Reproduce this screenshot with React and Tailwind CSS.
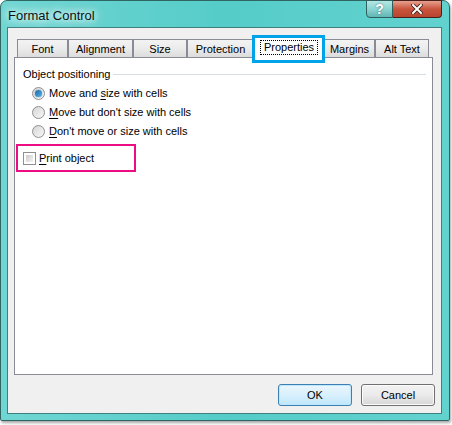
import { useState } from "react";

const TABS = [
  { label: "Font", w: "w-[51px]" },
  { label: "Alignment", w: "w-[65px]" },
  { label: "Size", w: "w-[54px]" },
  { label: "Protection", w: "w-[67px]" },
  { label: "Properties", w: "w-[70px]" },
  { label: "Margins", w: "w-[51px]" },
  { label: "Alt Text", w: "w-[54px]" },
];

const POSITIONS = [
  { key: "both", pre: "Move and ", mn: "s", post: "ize with cells" },
  { key: "move", pre: "", mn: "M", post: "ove but don't size with cells" },
  { key: "none", pre: "", mn: "D", post: "on't move or size with cells" },
];

/* ---------------------------------------------
   Small Win7-style controls
--------------------------------------------- */
const Radio = ({ checked }) => (
  <span className="w-[13px] h-[13px] rounded-full border border-[#8f8f8f] bg-gradient-to-br from-[#d6d6d6] to-[#f7f7f7] flex items-center justify-center shrink-0">
    {checked && (
      <span className="w-[7px] h-[7px] rounded-full bg-gradient-to-br from-[#1d6aa5] to-[#4fb2ec] shadow-[0_0_1px_#0b4b80]" />
    )}
  </span>
);

const Checkbox = () => (
  <span className="w-[13px] h-[13px] border border-[#8f8f8f] bg-white p-[2px] shrink-0">
    <span className="block w-full h-full bg-gradient-to-br from-[#cbcbcb] to-[#f4f4f4]" />
  </span>
);

const Button = ({ children, primary }) => (
  <button
    className={
      primary
        ? "w-[74px] h-[22px] rounded-[3px] border border-[#3c7fb1] bg-gradient-to-b from-[#eaf6fd] via-[#d9f0fc] to-[#bee6fd] text-[11px] text-black shadow-[inset_0_0_0_1px_#c0e7fc]"
        : "w-[74px] h-[22px] rounded-[3px] border border-[#707070] bg-gradient-to-b from-[#f2f2f2] via-[#ebebeb] to-[#d6d6d6] text-[11px] text-black shadow-[inset_0_0_0_1px_#fcfcfc]"
    }
  >
    {children}
  </button>
);

export default function App() {
  const [active] = useState("Properties");
  const [position] = useState("both");

  return (
    <div className="w-[452px] h-[425px] bg-white font-['Liberation_Sans',Arial,sans-serif] text-[11px] text-black">
      {/* WINDOW FRAME */}
      <div className="w-[450px] h-[421px] rounded-t-[7px] rounded-b-[2px] border border-[#2f6664] bg-gradient-to-r from-[#6fd6d3] via-[#55ccc8] to-[#62d2cf] flex flex-col shadow-[1px_2px_3px_rgba(0,0,0,0.35)]">
        {/* TITLE BAR */}
        <div className="h-[26px] flex items-start relative">
          <div className="pl-[7px] pt-[5px] text-[13px] text-[#111] [text-shadow:0_0_6px_#e8fbfb,0_0_10px_#e8fbfb,0_0_14px_#e8fbfb]">
            Format Control
          </div>
          <div className="ml-auto mr-[7px] -mt-px flex">
            <div className="w-[27px] h-[18px] rounded-bl-[4px] border border-[#2f5f5e] bg-gradient-to-b from-[#b5e6e4] via-[#8cd5d2] to-[#5fb6b3] flex items-center justify-center text-white font-bold text-[14px] [text-shadow:0_0_2px_#3b6b6a]">
              ?
            </div>
            <div className="w-[49px] h-[18px] rounded-br-[4px] border border-l-0 border-[#4a1f1a] bg-gradient-to-b from-[#e5a08f] via-[#c8543d] to-[#b8452f] flex items-center justify-center">
              <svg width="12" height="10" viewBox="0 0 12 10">
                <path d="M2 1 L10 9 M10 1 L2 9" stroke="#3a1a14" strokeWidth="3.6" strokeLinecap="square" />
                <path d="M2 1 L10 9 M10 1 L2 9" stroke="#fff" strokeWidth="2" strokeLinecap="square" />
              </svg>
            </div>
          </div>
        </div>

        {/* CLIENT AREA */}
        <div className="flex-1 ml-[6px] mr-[7px] mb-[6px] border border-[#3f7f7d] bg-[#f0f0f0] flex flex-col">
          <div className="pt-[8px] pl-[6px] pr-[6px]">
            {/* TABS */}
            <div className="h-[21px] flex items-end pl-[3px] relative z-10">
              {TABS.map(tab =>
                tab.label === active ? (
                  <div
                    key={tab.label}
                    className={`${tab.w} h-[22px] -mb-px border border-b-0 border-[#898c95] bg-white flex items-center justify-center relative`}
                  >
                    <span className="px-[3px] h-[15px] leading-[13px] border border-dotted border-black">
                      {tab.label}
                    </span>
                    {/* highlight frame */}
                    <span className="absolute -left-[3px] -right-[2px] -top-[2px] -bottom-[5px] border-[3px] border-[#00a2e8]" />
                  </div>
                ) : (
                  <div
                    key={tab.label}
                    className={`${tab.w} h-[18px] border border-b-0 border-[#898c95] bg-gradient-to-b from-[#f3f3f3] via-[#ebebeb] to-[#dcdcdc] flex items-center justify-center pt-px`}
                  >
                    {tab.label}
                  </div>
                )
              )}
            </div>

            {/* PANEL */}
            <div className="h-[318px] w-[419px] border border-[#898c95] bg-white flex flex-col">
              <div className="mt-[9px] ml-[8px] mr-[6px] h-[14px] flex items-center gap-[3px]">
                <span>Object positioning</span>
                <span className="flex-1 h-px bg-[#d5dfe5] mt-px" />
              </div>

              <div className="mt-[3px]">
                {POSITIONS.map(p => (
                  <div key={p.key} className="h-[19px] ml-[17px] flex items-center gap-[4px]">
                    <Radio checked={position === p.key} />
                    <span>
                      {p.pre}
                      <span className="underline underline-offset-[2px]">{p.mn}</span>
                      {p.post}
                    </span>
                  </div>
                ))}
              </div>

              <div className="mt-[3px] ml-[1px] w-[120px] h-[28px] border-2 border-[#ec0c84] flex items-center pl-[5px] gap-[3px]">
                <Checkbox />
                <span>
                  <span className="underline underline-offset-[2px]">P</span>rint object
                </span>
              </div>
            </div>
          </div>

          {/* DIALOG BUTTONS */}
          <div className="mt-[9px] pr-[6px] flex justify-end gap-[9px]">
            <Button primary>OK</Button>
            <Button>Cancel</Button>
          </div>
        </div>
      </div>
    </div>
  );
}
